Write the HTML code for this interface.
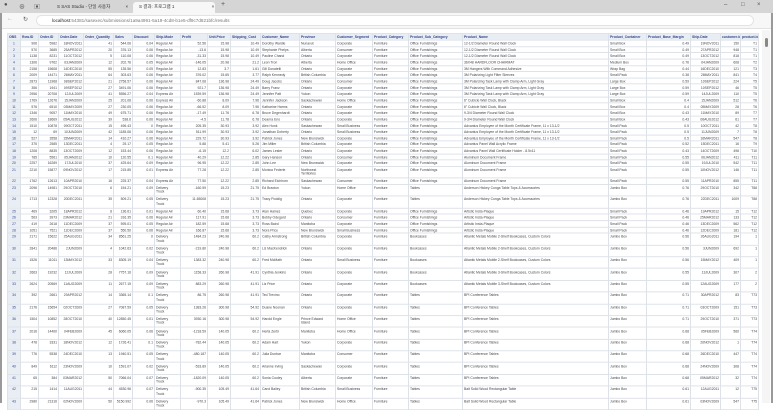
<!DOCTYPE html>
<html><head><meta charset="utf-8">
<style>
*{margin:0;padding:0;box-sizing:border-box}
body{width:773px;height:403px;overflow:hidden;background:#fff;font-family:"Liberation Sans","Noto Sans CJK KR",sans-serif;position:relative}
.tabs{position:absolute;left:0;top:0;width:773px;height:13px;background:#d5d5d5}
.tab{position:absolute;top:2px;height:11px;font-size:4.5px;line-height:10px;color:#333;padding-left:6px}
.tab1{left:51px;width:80px}
.tab2{left:133px;width:82px;background:#f7f7f7;border-radius:3px 3px 0 0}
.addr{position:absolute;left:0;top:13px;width:773px;height:16px;background:#f7f7f7;border-bottom:1px solid #e2e2e2}
.url{position:absolute;left:36px;top:2px;width:718px;height:11px;background:#fff;border-radius:6px;border:1px solid #e3e3e3;font-size:4.6px;line-height:9px;padding-left:15px;color:#777}
.url b{color:#222;font-weight:normal}
.ic{position:absolute;font-size:6px;color:#555}
table{position:absolute;left:7px;top:33px;border-collapse:collapse;table-layout:fixed;width:751px;font-size:3.4px;color:#444;transform:scaleY(0.95);transform-origin:0 0}
td,th{border:1px solid #dde1e8;padding:1.2px 1px 0 1px;line-height:4.3px;vertical-align:top;overflow:hidden;white-space:nowrap}
th{background:#e9edf4;color:#35478d;height:7px;font-weight:bold;text-align:left}
td.o{background:#e9edf4;color:#35478d;text-align:center}
td.r{text-align:right}
tr{height:6.65px}
tr.d{height:12.4px}
.sb{position:absolute;left:762px;top:30px;width:8px;height:373px;background:#f5f5f5}
.th{position:absolute;left:765px;top:38px;width:3px;height:9px;background:#888;border-radius:2px}
.lb{position:absolute;left:0;top:13px;width:2px;height:390px;background:#9a9a9a}
.rb{position:absolute;right:0;top:13px;width:2px;height:390px;background:#9a9a9a}
</style></head><body>
<div class="tabs">
<span class="ic" style="left:4px;top:2px">●</span><span class="ic" style="left:19px;top:2px">⊕</span><span class="ic" style="left:34px;top:2px">▣</span>
<div class="tab tab1">S SAS Studio - 단일 사용자 <span style="margin-left:14px">×</span></div>
<div class="tab tab2">S 결과: 프로그램 1 <span style="margin-left:36px">×</span></div>
<span class="ic" style="left:221px;top:1px;font-size:7px">+</span>
<span class="ic" style="left:724px;top:2px">–</span><span class="ic" style="left:741px;top:2px">□</span><span class="ic" style="left:757px;top:2px">×</span>
</div>
<div class="addr">
<span class="ic" style="left:7px;top:3px;color:#aaa">←</span><span class="ic" style="left:23px;top:3px">↻</span>
<div class="url"><b>localhost</b>:54381/sasexec/submissions/1a9a4991-5a19-4cd8-b1e5-df9c7d821bfc/results</div>
</div>
<div class="lb"></div>
<table>
<colgroup><col style="width:13px"><col style="width:18px"><col style="width:20px"><col style="width:25px"><col style="width:30px"><col style="width:19px"><col style="width:22px"><col style="width:26px"><col style="width:27px"><col style="width:23px"><col style="width:30px"><col style="width:39px"><col style="width:36px"><col style="width:37px"><col style="width:36px"><col style="width:54px"><col style="width:146px"><col style="width:38px"><col style="width:44px"><col style="width:30px"><col style="width:20px"><col style="width:18px"></colgroup>
<tr><th>OBS</th><th>Row.ID</th><th>Order.ID</th><th>Order.Date</th><th>Order_Quantity</th><th>Sales</th><th>Discount</th><th>Ship.Mode</th><th>Profit</th><th>Unit.Price</th><th>Shipping_Cost</th><th>Customer_Name</th><th>Province</th><th>Customer_Segment</th><th>Product_Category</th><th>Product_Sub_Category</th><th>Product_Name</th><th>Product_Container</th><th>Product_Base_Margin</th><th>Ship.Date</th><th>customer.id</th><th>product.id</th></tr>
<tr><td class="o">1</td><td class="r">906</td><td class="r">5982</td><td class="r">18NOV2011</td><td class="r">41</td><td class="r">544.06</td><td class="r">0.04</td><td>Regular Air</td><td class="r">52.56</td><td class="r">15.98</td><td class="r">10.49</td><td>Dorothy Wardle</td><td>Nunavut</td><td>Corporate</td><td>Furniture</td><td>Office Furnishings</td><td>12-1/2 Diameter Round Wall Clock</td><td>Small Box</td><td class="r">0.49</td><td class="r">19NOV2011</td><td class="r">150</td><td class="r">T1</td></tr>
<tr><td class="o">2</td><td class="r">570</td><td class="r">3685</td><td class="r">25APR2012</td><td class="r">20</td><td class="r">376.13</td><td class="r">0.06</td><td>Regular Air</td><td class="r">-13.6</td><td class="r">15.98</td><td class="r">10.49</td><td>Stephanie Phelps</td><td>Alberta</td><td>Consumer</td><td>Furniture</td><td>Office Furnishings</td><td>12-1/2 Diameter Round Wall Clock</td><td>Small Box</td><td class="r">0.49</td><td class="r">27APR2012</td><td class="r">948</td><td class="r">T1</td></tr>
<tr><td class="o">3</td><td class="r">1138</td><td class="r">8231</td><td class="r">11OCT2012</td><td class="r">5</td><td class="r">110.08</td><td class="r">0.06</td><td>Regular Air</td><td class="r">-31.33</td><td class="r">15.98</td><td class="r">10.49</td><td>Pauline Chand</td><td>Ontario</td><td>Corporate</td><td>Furniture</td><td>Office Furnishings</td><td>12-1/2 Diameter Round Wall Clock</td><td>Small Box</td><td class="r">0.49</td><td class="r">13OCT2012</td><td class="r">818</td><td class="r">T1</td></tr>
<tr><td class="o">4</td><td class="r">1306</td><td class="r">9762</td><td class="r">03JAN2009</td><td class="r">12</td><td class="r">202.76</td><td class="r">0.05</td><td>Regular Air</td><td class="r">-146.05</td><td class="r">20.98</td><td class="r">21.2</td><td>Leon Tron</td><td>Alberta</td><td>Home Office</td><td>Furniture</td><td>Office Furnishings</td><td>36X48 HARDFLOOR CHAIRMAT</td><td>Medium Box</td><td class="r">0.76</td><td class="r">04JAN2009</td><td class="r">608</td><td class="r">T2</td></tr>
<tr><td class="o">5</td><td class="r">2158</td><td class="r">15608</td><td class="r">14DEC2010</td><td class="r">55</td><td class="r">135.56</td><td class="r">0.05</td><td>Regular Air</td><td class="r">12.83</td><td class="r">3.7</td><td class="r">1.61</td><td>Gill Donatelli</td><td>Ontario</td><td>Corporate</td><td>Furniture</td><td>Office Furnishings</td><td>3M Hangers With Command Adhesive</td><td>Wrap Bag</td><td class="r">0.44</td><td class="r">16DEC2010</td><td class="r">121</td><td class="r">T3</td></tr>
<tr><td class="o">6</td><td class="r">2009</td><td class="r">14471</td><td class="r">26MAY2011</td><td class="r">64</td><td class="r">303.63</td><td class="r">0.06</td><td>Regular Air</td><td class="r">376.02</td><td class="r">15.65</td><td class="r">3.77</td><td>Ralph Kennedy</td><td>British Columbia</td><td>Corporate</td><td>Furniture</td><td>Office Furnishings</td><td>3M Polarizing Light Filter Sleeves</td><td>Small Pack</td><td class="r">0.38</td><td class="r">28MAY2011</td><td class="r">841</td><td class="r">T4</td></tr>
<tr><td class="o">7</td><td class="r">2873</td><td class="r">11968</td><td class="r">08SEP2012</td><td class="r">21</td><td class="r">2758.57</td><td class="r">0.06</td><td>Regular Air</td><td class="r">847.08</td><td class="r">136.98</td><td class="r">24.49</td><td>Doug Jacobs</td><td>Ontario</td><td>Consumer</td><td>Furniture</td><td>Office Furnishings</td><td>3M Polarizing Task Lamp with Clamp Arm, Light Gray</td><td>Large Box</td><td class="r">0.59</td><td class="r">10SEP2012</td><td class="r">224</td><td class="r">T5</td></tr>
<tr><td class="o">8</td><td class="r">356</td><td class="r">1941</td><td class="r">09SEP2012</td><td class="r">27</td><td class="r">3491.06</td><td class="r">0.06</td><td>Regular Air</td><td class="r">921.7</td><td class="r">136.98</td><td class="r">24.49</td><td>Barry Franz</td><td>Ontario</td><td>Corporate</td><td>Furniture</td><td>Office Furnishings</td><td>3M Polarizing Task Lamp with Clamp Arm, Light Gray</td><td>Large Box</td><td class="r">0.59</td><td class="r">10SEP2012</td><td class="r">46</td><td class="r">T5</td></tr>
<tr><td class="o">9</td><td class="r">2956</td><td class="r">20708</td><td class="r">12JUL2009</td><td class="r">41</td><td class="r">5556.27</td><td class="r">0.04</td><td>Express Air</td><td class="r">1539.59</td><td class="r">136.98</td><td class="r">24.49</td><td>Jennifer Patt</td><td>Yukon</td><td>Corporate</td><td>Furniture</td><td>Office Furnishings</td><td>3M Polarizing Task Lamp with Clamp Arm, Light Gray</td><td>Large Box</td><td class="r">0.59</td><td class="r">14JUL2009</td><td class="r">110</td><td class="r">T5</td></tr>
<tr><td class="o">10</td><td class="r">1769</td><td class="r">12676</td><td class="r">15JAN2009</td><td class="r">25</td><td class="r">201.08</td><td class="r">0.06</td><td>Express Air</td><td class="r">-60.88</td><td class="r">8.09</td><td class="r">7.96</td><td>Jennifer Jackson</td><td>Saskachewan</td><td>Home Office</td><td>Furniture</td><td>Office Furnishings</td><td>6" Cubicle Wall Clock, Black</td><td>Small Box</td><td class="r">0.4</td><td class="r">15JAN2009</td><td class="r">512</td><td class="r">T6</td></tr>
<tr><td class="o">11</td><td class="r">576</td><td class="r">6510</td><td class="r">03MAY2009</td><td class="r">27</td><td class="r">230.05</td><td class="r">0.06</td><td>Regular Air</td><td class="r">-66.52</td><td class="r">8.09</td><td class="r">7.96</td><td>Katharine Harms</td><td>Ontario</td><td>Corporate</td><td>Furniture</td><td>Office Furnishings</td><td>6" Cubicle Wall Clock, Black</td><td>Small Box</td><td class="r">0.4</td><td class="r">05MAY2009</td><td class="r">28</td><td class="r">T6</td></tr>
<tr><td class="o">12</td><td class="r">1346</td><td class="r">9057</td><td class="r">11MAY2010</td><td class="r">49</td><td class="r">675.71</td><td class="r">0.06</td><td>Regular Air</td><td class="r">-17.49</td><td class="r">11.76</td><td class="r">6.78</td><td>Bruce Degenhardt</td><td>Ontario</td><td>Corporate</td><td>Furniture</td><td>Office Furnishings</td><td>9-3/4 Diameter Round Wall Clock</td><td>Small Box</td><td class="r">0.43</td><td class="r">11MAY2010</td><td class="r">89</td><td class="r">T7</td></tr>
<tr><td class="o">13</td><td class="r">2606</td><td class="r">18669</td><td class="r">05AUG2012</td><td class="r">39</td><td class="r">538.6</td><td class="r">0.06</td><td>Regular Air</td><td class="r">-4.5</td><td class="r">11.78</td><td class="r">6.78</td><td>Deanra Eno</td><td>Ontario</td><td>Corporate</td><td>Furniture</td><td>Office Furnishings</td><td>9-3/4 Diameter Round Wall Clock</td><td>Small Box</td><td class="r">0.43</td><td class="r">06AUG2012</td><td class="r">61</td><td class="r">T7</td></tr>
<tr><td class="o">14</td><td class="r">1510</td><td class="r">10878</td><td class="r">09OCT2011</td><td class="r">15</td><td class="r">496.43</td><td class="r">0</td><td>Regular Air</td><td class="r">205.35</td><td class="r">30.93</td><td class="r">3.92</td><td>Alex Hunk</td><td>Saskachewan</td><td>Small Business</td><td>Furniture</td><td>Office Furnishings</td><td>Advantus Employee of the Month Certificate Frame, 11 x 13-1/2</td><td>Small Pack</td><td class="r">0.5</td><td class="r">10OCT2011</td><td class="r">42</td><td class="r">T8</td></tr>
<tr><td class="o">15</td><td class="r">12</td><td class="r">69</td><td class="r">10JUN2009</td><td class="r">42</td><td class="r">1185.06</td><td class="r">0.06</td><td>Regular Air</td><td class="r">511.99</td><td class="r">30.93</td><td class="r">3.92</td><td>Jonathan Doherty</td><td>Ontario</td><td>Small Business</td><td>Furniture</td><td>Office Furnishings</td><td>Advantus Employee of the Month Certificate Frame, 11 x 13-1/2</td><td>Small Pack</td><td class="r">0.5</td><td class="r">11JUN2009</td><td class="r">7</td><td class="r">T8</td></tr>
<tr><td class="o">16</td><td class="r">527</td><td class="r">3558</td><td class="r">15MAR2011</td><td class="r">14</td><td class="r">410.27</td><td class="r">0.06</td><td>Regular Air</td><td class="r">229.72</td><td class="r">30.93</td><td class="r">3.92</td><td>Patrick Jones</td><td>New Brunswick</td><td>Corporate</td><td>Furniture</td><td>Office Furnishings</td><td>Advantus Employee of the Month Certificate Frame, 11 x 13-1/2</td><td>Small Pack</td><td class="r">0.5</td><td class="r">16MAR2011</td><td class="r">547</td><td class="r">T8</td></tr>
<tr><td class="o">17</td><td class="r">375</td><td class="r">2585</td><td class="r">13DEC2011</td><td class="r">4</td><td class="r">25.17</td><td class="r">0.05</td><td>Regular Air</td><td class="r">5.88</td><td class="r">5.41</td><td class="r">5.26</td><td>Jim Miller</td><td>British Columbia</td><td>Corporate</td><td>Furniture</td><td>Office Furnishings</td><td>Advantus Panel Wall Acrylic Frame</td><td>Small Pack</td><td class="r">0.52</td><td class="r">15DEC2011</td><td class="r">16</td><td class="r">T9</td></tr>
<tr><td class="o">18</td><td class="r">1208</td><td class="r">8835</td><td class="r">13OCT2009</td><td class="r">12</td><td class="r">153.44</td><td class="r">0.06</td><td>Regular Air</td><td class="r">-6.15</td><td class="r">12.2</td><td class="r">6.02</td><td>James Lester</td><td>Ontario</td><td>Corporate</td><td>Furniture</td><td>Office Furnishings</td><td>Advantus Panel Wall Certificate Holder - 8.5x11</td><td>Small Pack</td><td class="r">0.43</td><td class="r">14OCT2009</td><td class="r">498</td><td class="r">T10</td></tr>
<tr><td class="o">19</td><td class="r">785</td><td class="r">5561</td><td class="r">05JAN2012</td><td class="r">10</td><td class="r">120.55</td><td class="r">0.1</td><td>Regular Air</td><td class="r">40.29</td><td class="r">12.22</td><td class="r">2.85</td><td>Gary Hanson</td><td>Ontario</td><td>Consumer</td><td>Furniture</td><td>Office Furnishings</td><td>Aluminum Document Frame</td><td>Small Pack</td><td class="r">0.55</td><td class="r">06JAN2012</td><td class="r">411</td><td class="r">T11</td></tr>
<tr><td class="o">20</td><td class="r">2257</td><td class="r">16289</td><td class="r">17JUL2010</td><td class="r">37</td><td class="r">425.64</td><td class="r">0.09</td><td>Regular Air</td><td class="r">96.95</td><td class="r">12.22</td><td class="r">2.85</td><td>John Lee</td><td>New Brunswick</td><td>Corporate</td><td>Furniture</td><td>Office Furnishings</td><td>Aluminum Document Frame</td><td>Small Pack</td><td class="r">0.55</td><td class="r">19JUL2010</td><td class="r">542</td><td class="r">T11</td></tr>
<tr class="d"><td class="o">21</td><td class="r">2210</td><td class="r">15877</td><td class="r">09NOV2012</td><td class="r">17</td><td class="r">215.85</td><td class="r">0.01</td><td>Express Air</td><td class="r">77.28</td><td class="r">12.22</td><td class="r">2.85</td><td>Monica Federle</td><td>Northwest<br>Territories</td><td>Corporate</td><td>Furniture</td><td>Office Furnishings</td><td>Aluminum Document Frame</td><td>Small Pack</td><td class="r">0.55</td><td class="r">10NOV2012</td><td class="r">146</td><td class="r">T11</td></tr>
<tr><td class="o">22</td><td class="r">1762</td><td class="r">12613</td><td class="r">10APR2010</td><td class="r">16</td><td class="r">225.37</td><td class="r">0.04</td><td>Express Air</td><td class="r">77.50</td><td class="r">12.22</td><td class="r">2.85</td><td>Richard Eichhorn</td><td>Saskachewan</td><td>Consumer</td><td>Furniture</td><td>Office Furnishings</td><td>Aluminum Document Frame</td><td>Small Pack</td><td class="r">0.55</td><td class="r">11APR2010</td><td class="r">855</td><td class="r">T11</td></tr>
<tr class="d"><td class="o">23</td><td class="r">2096</td><td class="r">14981</td><td class="r">29OCT2010</td><td class="r">6</td><td class="r">154.21</td><td class="r">0.09</td><td>Delivery<br>Truck</td><td class="r">-160.59</td><td class="r">15.23</td><td class="r">21.75</td><td>Ed Braxton</td><td>Yukon</td><td>Home Office</td><td>Furniture</td><td>Tables</td><td>Anderson Hickey Conga Table Tops &amp; Accessories</td><td>Jumbo Box</td><td class="r">0.76</td><td class="r">29OCT2010</td><td class="r">342</td><td class="r">T88</td></tr>
<tr class="d"><td class="o">24</td><td class="r">1713</td><td class="r">12328</td><td class="r">20DEC2011</td><td class="r">35</td><td class="r">509.21</td><td class="r">0.05</td><td>Delivery<br>Truck</td><td class="r">11.65008</td><td class="r">15.23</td><td class="r">21.75</td><td>Tracy Poddig</td><td>Ontario</td><td>Corporate</td><td>Furniture</td><td>Tables</td><td>Anderson Hickey Conga Table Tops &amp; Accessories</td><td>Jumbo Box</td><td class="r">0.76</td><td class="r">22DEC2011</td><td class="r">1009</td><td class="r">T88</td></tr>
<tr><td class="o">25</td><td class="r">469</td><td class="r">3205</td><td class="r">18APR2012</td><td class="r">8</td><td class="r">136.61</td><td class="r">0.01</td><td>Regular Air</td><td class="r">60.40</td><td class="r">15.68</td><td class="r">3.73</td><td>Alan Haines</td><td>Quebec</td><td>Corporate</td><td>Furniture</td><td>Office Furnishings</td><td>Artistic Insta-Plaque</td><td>Small Pack</td><td class="r">0.46</td><td class="r">19APR2012</td><td class="r">15</td><td class="r">T12</td></tr>
<tr><td class="o">26</td><td class="r">563</td><td class="r">3973</td><td class="r">23MAR2012</td><td class="r">21</td><td class="r">316.35</td><td class="r">0.06</td><td>Regular Air</td><td class="r">117.91</td><td class="r">15.68</td><td class="r">3.73</td><td>Bobby Odegard</td><td>Ontario</td><td>Consumer</td><td>Furniture</td><td>Office Furnishings</td><td>Artistic Insta-Plaque</td><td>Small Pack</td><td class="r">0.46</td><td class="r">25MAR2012</td><td class="r">133</td><td class="r">T12</td></tr>
<tr><td class="o">27</td><td class="r">419</td><td class="r">2618</td><td class="r">11DEC2009</td><td class="r">37</td><td class="r">595.01</td><td class="r">0.05</td><td>Regular Air</td><td class="r">182.59</td><td class="r">15.68</td><td class="r">3.73</td><td>Ross Baird</td><td>Manitoba</td><td>Corporate</td><td>Furniture</td><td>Office Furnishings</td><td>Artistic Insta-Plaque</td><td>Small Pack</td><td class="r">0.46</td><td class="r">13DEC2009</td><td class="r">562</td><td class="r">T12</td></tr>
<tr><td class="o">28</td><td class="r">1051</td><td class="r">7521</td><td class="r">11DEC2009</td><td class="r">37</td><td class="r">550.50</td><td class="r">0.06</td><td>Regular Air</td><td class="r">166.87</td><td class="r">15.68</td><td class="r">3.73</td><td>Nora Price</td><td>New Brunswick</td><td>Small Business</td><td>Furniture</td><td>Office Furnishings</td><td>Artistic Insta-Plaque</td><td>Small Pack</td><td class="r">0.46</td><td class="r">12DEC2009</td><td class="r">181</td><td class="r">T12</td></tr>
<tr class="d"><td class="o">29</td><td class="r">2171</td><td class="r">15622</td><td class="r">25AUG2011</td><td class="r">34</td><td class="r">8561.25</td><td class="r">0</td><td>Delivery<br>Truck</td><td class="r">1484.23</td><td class="r">240.98</td><td class="r">60.2</td><td>Cathy Armstrong</td><td>British Columbia</td><td>Corporate</td><td>Furniture</td><td>Bookcases</td><td>Atlantic Metals Mobile 2-Shelf Bookcases, Custom Colors</td><td>Jumbo Box</td><td class="r">0.56</td><td class="r">26AUG2011</td><td class="r">194</td><td class="r">1</td></tr>
<tr class="d"><td class="o">30</td><td class="r">2841</td><td class="r">20486</td><td class="r">2JUN2009</td><td class="r">4</td><td class="r">1042.63</td><td class="r">0.02</td><td>Delivery<br>Truck</td><td class="r">-219.80</td><td class="r">240.98</td><td class="r">60.2</td><td>Liz MacKendrick</td><td>Ontario</td><td>Corporate</td><td>Furniture</td><td>Bookcases</td><td>Atlantic Metals Mobile 2-Shelf Bookcases, Custom Colors</td><td>Jumbo Box</td><td class="r">0.56</td><td class="r">3JUN2009</td><td class="r">692</td><td class="r">1</td></tr>
<tr class="d"><td class="o">31</td><td class="r">1526</td><td class="r">11011</td><td class="r">13MAY2012</td><td class="r">33</td><td class="r">8305.19</td><td class="r">0.04</td><td>Delivery<br>Truck</td><td class="r">1383.32</td><td class="r">240.98</td><td class="r">60.2</td><td>Fred McMath</td><td>Ontario</td><td>Small Business</td><td>Furniture</td><td>Bookcases</td><td>Atlantic Metals Mobile 2-Shelf Bookcases, Custom Colors</td><td>Jumbo Box</td><td class="r">0.56</td><td class="r">15MAY2012</td><td class="r">409</td><td class="r">1</td></tr>
<tr class="d"><td class="o">32</td><td class="r">2663</td><td class="r">19232</td><td class="r">12JUL2009</td><td class="r">28</td><td class="r">7757.16</td><td class="r">0.09</td><td>Delivery<br>Truck</td><td class="r">1158.33</td><td class="r">260.98</td><td class="r">41.91</td><td>Cynthia Jenkins</td><td>Ontario</td><td>Corporate</td><td>Furniture</td><td>Bookcases</td><td>Atlantic Metals Mobile 3-Shelf Bookcases, Custom Colors</td><td>Jumbo Box</td><td class="r">0.55</td><td class="r">13JUL2009</td><td class="r">307</td><td class="r">2</td></tr>
<tr class="d"><td class="o">33</td><td class="r">2624</td><td class="r">20569</td><td class="r">11AUG2009</td><td class="r">11</td><td class="r">2677.15</td><td class="r">0.09</td><td>Delivery<br>Truck</td><td class="r">883.29</td><td class="r">260.98</td><td class="r">41.91</td><td>Liz Price</td><td>Ontario</td><td>Corporate</td><td>Furniture</td><td>Bookcases</td><td>Atlantic Metals Mobile 3-Shelf Bookcases, Custom Colors</td><td>Jumbo Box</td><td class="r">0.55</td><td class="r">12AUG2009</td><td class="r">177</td><td class="r">2</td></tr>
<tr class="d"><td class="o">34</td><td class="r">392</td><td class="r">2661</td><td class="r">29APR2012</td><td class="r">14</td><td class="r">3365.14</td><td class="r">0.1</td><td>Delivery<br>Truck</td><td class="r">86.75</td><td class="r">260.98</td><td class="r">41.91</td><td>Ted Trevino</td><td>Ontario</td><td>Corporate</td><td>Furniture</td><td>Tables</td><td>BPI Conference Tables</td><td>Jumbo Box</td><td class="r">0.71</td><td class="r">30APR2012</td><td class="r">83</td><td class="r">T73</td></tr>
<tr class="d"><td class="o">35</td><td class="r">2176</td><td class="r">15654</td><td class="r">02OCT2009</td><td class="r">27</td><td class="r">7087.59</td><td class="r">0.05</td><td>Delivery<br>Truck</td><td class="r">1383.26</td><td class="r">300.98</td><td class="r">54.92</td><td>Duane Noonan</td><td>Ontario</td><td>Corporate</td><td>Furniture</td><td>Tables</td><td>BPI Conference Tables</td><td>Jumbo Box</td><td class="r">0.71</td><td class="r">03OCT2009</td><td class="r">151</td><td class="r">T73</td></tr>
<tr class="d"><td class="o">36</td><td class="r">1504</td><td class="r">10852</td><td class="r">28OCT2010</td><td class="r">40</td><td class="r">12850.45</td><td class="r">0.01</td><td>Delivery<br>Truck</td><td class="r">3930.16</td><td class="r">300.98</td><td class="r">54.92</td><td>Harold Engle</td><td>Prince Edward<br>Island</td><td>Home Office</td><td>Furniture</td><td>Tables</td><td>BPI Conference Tables</td><td>Jumbo Box</td><td class="r">0.71</td><td class="r">29OCT2010</td><td class="r">371</td><td class="r">T73</td></tr>
<tr class="d"><td class="o">37</td><td class="r">2016</td><td class="r">14400</td><td class="r">04FEB2009</td><td class="r">45</td><td class="r">6060.05</td><td class="r">0.06</td><td>Delivery<br>Truck</td><td class="r">-1218.59</td><td class="r">140.05</td><td class="r">60.2</td><td>Herta Zerbi</td><td>Manitoba</td><td>Home Office</td><td>Furniture</td><td>Tables</td><td>BPI Conference Tables</td><td>Jumbo Box</td><td class="r">0.68</td><td class="r">05FEB2009</td><td class="r">560</td><td class="r">T74</td></tr>
<tr class="d"><td class="o">38</td><td class="r">478</td><td class="r">3331</td><td class="r">18NOV2012</td><td class="r">12</td><td class="r">1726.41</td><td class="r">0.1</td><td>Delivery<br>Truck</td><td class="r">-782.44</td><td class="r">140.05</td><td class="r">60.2</td><td>Adam Hart</td><td>Yukon</td><td>Corporate</td><td>Furniture</td><td>Tables</td><td>BPI Conference Tables</td><td>Jumbo Box</td><td class="r">0.68</td><td class="r">20NOV2012</td><td class="r">1</td><td class="r">T74</td></tr>
<tr class="d"><td class="o">39</td><td class="r">776</td><td class="r">5538</td><td class="r">24DEC2010</td><td class="r">13</td><td class="r">1940.51</td><td class="r">0.05</td><td>Delivery<br>Truck</td><td class="r">-480.187</td><td class="r">140.05</td><td class="r">60.2</td><td>Julia Dunbar</td><td>Manitoba</td><td>Consumer</td><td>Furniture</td><td>Tables</td><td>BPI Conference Tables</td><td>Jumbo Box</td><td class="r">0.68</td><td class="r">26DEC2010</td><td class="r">447</td><td class="r">T74</td></tr>
<tr class="d"><td class="o">40</td><td class="r">849</td><td class="r">6112</td><td class="r">23NOV2009</td><td class="r">10</td><td class="r">1591.07</td><td class="r">0.02</td><td>Delivery<br>Truck</td><td class="r">-533.89</td><td class="r">140.05</td><td class="r">60.2</td><td>Arianne Irving</td><td>Saskachewan</td><td>Corporate</td><td>Furniture</td><td>Tables</td><td>BPI Conference Tables</td><td>Jumbo Box</td><td class="r">0.68</td><td class="r">24NOV2009</td><td class="r">308</td><td class="r">T74</td></tr>
<tr class="d"><td class="o">41</td><td class="r">65</td><td class="r">384</td><td class="r">03MAR2012</td><td class="r">50</td><td class="r">7066.04</td><td class="r">0.07</td><td>Delivery<br>Truck</td><td class="r">-1820.09</td><td class="r">140.05</td><td class="r">60.2</td><td>Sonia Cooley</td><td>Alberta</td><td>Corporate</td><td>Furniture</td><td>Tables</td><td>BPI Conference Tables</td><td>Jumbo Box</td><td class="r">0.68</td><td class="r">05MAR2012</td><td class="r">32</td><td class="r">T74</td></tr>
<tr class="d"><td class="o">42</td><td class="r">215</td><td class="r">1414</td><td class="r">11AUG2011</td><td class="r">44</td><td class="r">4530.96</td><td class="r">0.07</td><td>Delivery<br>Truck</td><td class="r">-900.35</td><td class="r">105.49</td><td class="r">41.64</td><td>Carol Bailey</td><td>British Columbia</td><td>Small Business</td><td>Furniture</td><td>Tables</td><td>Balt Solid Wood Rectangular Table</td><td>Jumbo Box</td><td class="r">0.61</td><td class="r">12AUG2011</td><td class="r">12</td><td class="r">T75</td></tr>
<tr class="d"><td class="o">43</td><td class="r">2980</td><td class="r">21316</td><td class="r">02NOV2009</td><td class="r">50</td><td class="r">5150.992</td><td class="r">0.06</td><td>Delivery<br>Truck</td><td class="r">-970.3</td><td class="r">105.49</td><td class="r">41.64</td><td>Patrick Jones</td><td>New Brunswick</td><td>Home Office</td><td>Furniture</td><td>Tables</td><td>Balt Solid Wood Rectangular Table</td><td>Jumbo Box</td><td class="r">0.61</td><td class="r">03NOV2009</td><td class="r">547</td><td class="r">T75</td></tr>
</table>
<div class="sb"></div><div class="th"></div>
<div class="rb"></div>
</body></html>
